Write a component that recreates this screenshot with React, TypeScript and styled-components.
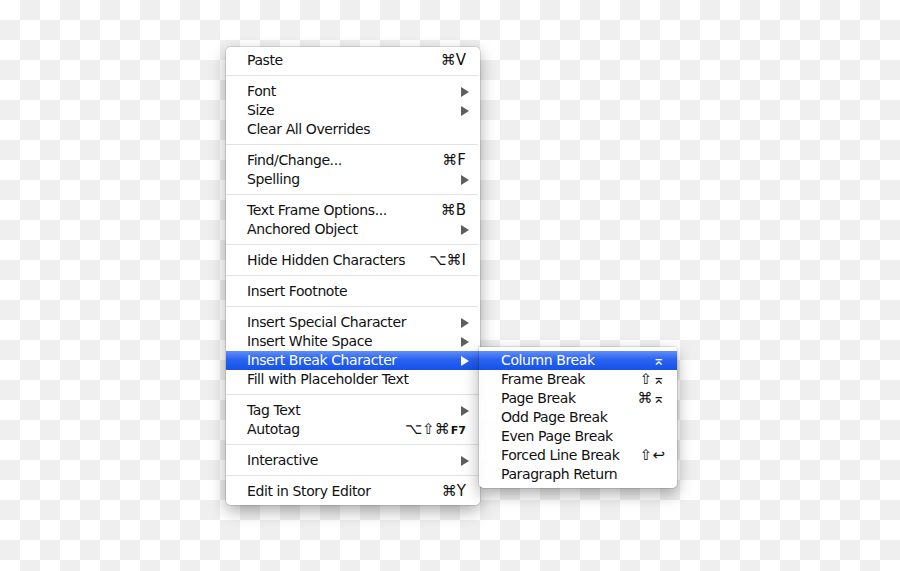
import React from 'react'
import styled, { createGlobalStyle } from 'styled-components'

type Item = {
  label: string
  keys?: string
  fkey?: string
  sub?: boolean
  active?: boolean
}

const groups: Item[][] = [
  [{ label: 'Paste', keys: '⌘V' }],
  [{ label: 'Font', sub: true }, { label: 'Size', sub: true }, { label: 'Clear All Overrides' }],
  [{ label: 'Find/Change...', keys: '⌘F' }, { label: 'Spelling', sub: true }],
  [{ label: 'Text Frame Options...', keys: '⌘B' }, { label: 'Anchored Object', sub: true }],
  [{ label: 'Hide Hidden Characters', keys: '⌥⌘I' }],
  [{ label: 'Insert Footnote' }],
  [
    { label: 'Insert Special Character', sub: true },
    { label: 'Insert White Space', sub: true },
    { label: 'Insert Break Character', sub: true, active: true },
    { label: 'Fill with Placeholder Text' },
  ],
  [{ label: 'Tag Text', sub: true }, { label: 'Autotag', keys: '⌥⇧⌘', fkey: 'F7' }],
  [{ label: 'Interactive', sub: true }],
  [{ label: 'Edit in Story Editor', keys: '⌘Y' }],
]

const breaks: Item[] = [
  { label: 'Column Break', keys: '⌅', active: true },
  { label: 'Frame Break', keys: '⇧⌅' },
  { label: 'Page Break', keys: '⌘⌅' },
  { label: 'Odd Page Break' },
  { label: 'Even Page Break' },
  { label: 'Forced Line Break', keys: '⇧↩' },
  { label: 'Paragraph Return' },
]

function Arrow({ active }: { active?: boolean }) {
  return (
    <ArrowIcon width="8" height="10" viewBox="0 0 8 10">
      <polygon points="0,0 8,5 0,10" fill={active ? '#fff' : '#5e5e5e'} />
    </ArrowIcon>
  )
}

function Row({ item }: { item: Item }) {
  return (
    <ItemRow active={item.active}>
      <Label>{item.label}</Label>
      {item.keys && (
        <Keys>
          {item.keys}
          {item.fkey && <FKey>{item.fkey}</FKey>}
        </Keys>
      )}
      {item.sub && <Arrow active={item.active} />}
    </ItemRow>
  )
}

function App() {
  return (
    <Stage>
      <GlobalStyle />
      <MenuWrap>
        <Menu>
          {groups.map((group, i) => (
            <React.Fragment key={i}>
              {i > 0 && <Separator />}
              {group.map((item) => (
                <Row key={item.label} item={item} />
              ))}
            </React.Fragment>
          ))}
        </Menu>
        <SubMenu>
          {breaks.map((item) => (
            <SubRow key={item.label} active={item.active}>
              <Label>{item.label}</Label>
              {item.keys && <Keys>{item.keys}</Keys>}
            </SubRow>
          ))}
        </SubMenu>
      </MenuWrap>
    </Stage>
  )
}

export default App

const GlobalStyle = createGlobalStyle`
  body {
    margin: 0;
    background-color: #fff;
    background-image: conic-gradient(#efefef 0 25%, #fff 0 50%, #efefef 0 75%, #fff 0);
    background-size: 40px 40px;
    font-family: "DejaVu Sans", "Liberation Sans", sans-serif;
  }
`

const Stage = styled.main`
  min-height: 571px;
  padding: 47px 0 0 226px;
  box-sizing: border-box;
`

const MenuWrap = styled.div`
  position: relative;
  width: 254px;
`

const Menu = styled.div`
  background: rgba(255, 255, 255, 0.95);
  border-radius: 5px;
  padding: 4px 0;
  box-shadow: 0 0 0 1px rgba(0, 0, 0, 0.1), 0 6px 16px rgba(0, 0, 0, 0.33);
`

const Separator = styled.div`
  height: 1px;
  margin: 5px 2px 6px 0;
  background: #e2e2e2;
`

const ItemRow = styled.div<{ active?: boolean }>`
  display: flex;
  align-items: center;
  box-sizing: border-box;
  height: 19px;
  padding: 0 14px 2px 21px;
  font-size: 14px;
  letter-spacing: -0.4px;
  color: ${(p) => (p.active ? '#fff' : '#111')};
  background: ${(p) =>
    p.active ? 'linear-gradient(#5f8ff7 0%, #2a63f0 45%, #1652e9 100%)' : 'transparent'};
`

const SubRow = styled(ItemRow)`
  padding: 0 12px 2px 22px;
`

const Label = styled.span`
  flex: 1;
  white-space: nowrap;
`

const Keys = styled.span`
  display: flex;
  align-items: baseline;
  white-space: nowrap;
  letter-spacing: 0;
  font-size: 15px;
`

const FKey = styled.span`
  font-size: 11px;
  font-weight: bold;
  margin-left: 1px;
`

const ArrowIcon = styled.svg`
  margin: 2px -3px 0 0;
  flex-shrink: 0;
`

const SubMenu = styled.div`
  position: absolute;
  top: 300px;
  left: 253px;
  width: 198px;
  padding: 4px 0;
  background: rgba(255, 255, 255, 0.95);
  border-radius: 0 4px 5px 5px;
  box-shadow: 0 0 0 1px rgba(0, 0, 0, 0.1), 0 6px 16px rgba(0, 0, 0, 0.33);
`
